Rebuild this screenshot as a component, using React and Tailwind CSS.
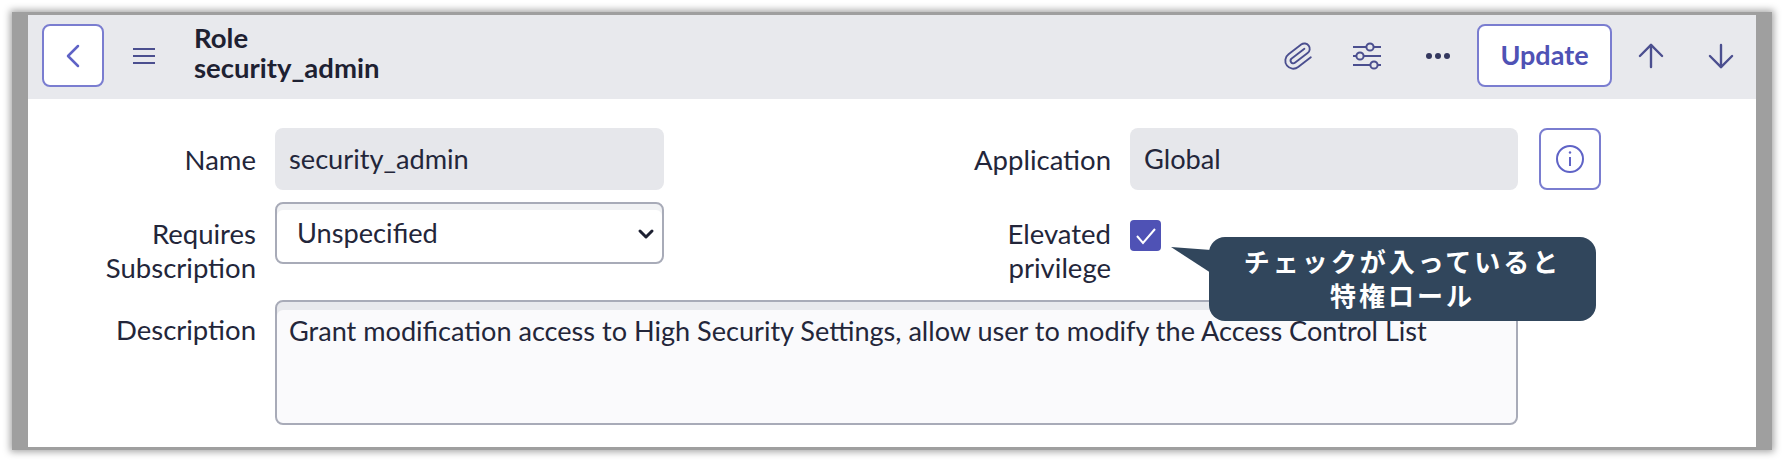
import { ChevronLeft, ChevronDown, ArrowUp, ArrowDown, Paperclip } from "lucide-react";

const INK = "#4b4f8f";

function MenuIcon() {
    return (
        <svg width="24" height="18" viewBox="0 0 24 18" fill="none" stroke={INK} strokeWidth="2.2">
            <path d="M1 2h22M1 9h22M1 16h22" />
        </svg>
    );
}

function SlidersIcon() {
    return (
        <svg width="30" height="28" viewBox="0 0 30 28" fill="none" stroke={INK} strokeWidth="2">
            <path d="M1 5h13M22 5h7M1 14h3M12 14h17M1 23h17M26 23h3" />
            <circle cx="18" cy="5" r="3.6" />
            <circle cx="8" cy="14" r="3.6" />
            <circle cx="22" cy="23" r="3.6" />
        </svg>
    );
}

function InfoIcon() {
    return (
        <svg width="30" height="30" viewBox="0 0 30 30" fill="none" stroke="#5f63c6" strokeWidth="2">
            <circle cx="15" cy="15" r="13" />
            <path d="M15 13v9" />
            <circle cx="15" cy="8.5" r="1.2" fill="#5f63c6" stroke="none" />
        </svg>
    );
}

function Label({ children }) {
    return <div className="pt-[15px] text-right text-[27.5px] leading-[34px] text-[#23263a]">{children}</div>;
}

export default function App() {
    return (
        <div className="h-[462px] w-[1784px] bg-white pt-[12px] pl-[12px] font-['Lato','Noto_Sans_CJK_JP',sans-serif]">
            <div className="relative h-[438px] w-[1760px] border-x-[16px] border-y-[3px] border-[#9f9f9f] bg-white shadow-[0_0_7px_2px_#a8a8a8]">
                {/* Header */}
                <div className="flex h-[84px] items-center bg-[#e8e9ed] pb-[3px] pl-[14px] pr-[16px]">
                    <button className="flex h-[63px] w-[62px] items-center justify-center rounded-[8px] border-2 border-[#7a7dd0] bg-white">
                        <ChevronLeft size={40} strokeWidth={1.5} color="#5f63c6" />
                    </button>
                    <div className="ml-[28px]">
                        <MenuIcon />
                    </div>
                    <div className="mb-[5px] ml-[38px] text-[27.5px] leading-[30px] font-bold text-[#1e2132]">
                        <div>Role</div>
                        <div>security_admin</div>
                    </div>
                    <div className="ml-auto flex items-center">
                        <Paperclip className="rotate-[8deg]" size={32} strokeWidth={1.4} color={INK} />
                        <div className="ml-[38px]">
                            <SlidersIcon />
                        </div>
                        <div className="ml-[44px] flex gap-[3px]">
                            <span className="size-[6px] rounded-full bg-[#34385f]" />
                            <span className="size-[6px] rounded-full bg-[#34385f]" />
                            <span className="size-[6px] rounded-full bg-[#34385f]" />
                        </div>
                        <button className="ml-[27px] h-[63px] w-[135px] rounded-[8px] border-2 border-[#7a7dd0] bg-white text-[27px] font-bold text-[#4f52b5]">
                            Update
                        </button>
                        <ArrowUp className="ml-[20px]" size={38} strokeWidth={1.5} color={INK} />
                        <ArrowDown className="ml-[32px]" size={38} strokeWidth={1.5} color={INK} />
                    </div>
                </div>

                {/* Form */}
                <div className="grid grid-cols-[228px_389px_428px_388px_64px] grid-rows-[62px_86px_125px] gap-x-[19px] gap-y-[12px] pt-[29px]">
                    <Label>Name</Label>
                    <input
                        readOnly
                        value="security_admin"
                        className="h-[62px] rounded-[8px] bg-[#e6e7eb] px-[14px] pb-[2px] text-[27.2px] text-[#23263a]"
                    />
                    <Label>Application</Label>
                    <input
                        readOnly
                        value="Global"
                        className="h-[62px] rounded-[8px] bg-[#e6e7eb] px-[14px] pb-[2px] text-[27.2px] text-[#23263a]"
                    />
                    <button className="ml-[2px] flex h-[62px] w-[62px] items-center justify-center rounded-[8px] border-2 border-[#7a7dd0] bg-white">
                        <InfoIcon />
                    </button>

                    <Label>
                        Requires
                        <br />
                        Subscription
                    </Label>
                    <div className="relative">
                        <select className="h-[62px] w-full appearance-none rounded-[8px] border-2 border-[#a8abb8] bg-white pl-[20px] pr-[8px] text-[27.2px] text-[#23263a] shadow-[inset_0_6px_0_#f1f2f4]">
                            <option>Unspecified</option>
                        </select>
                        <ChevronDown
                            className="pointer-events-none absolute top-[20px] right-[6px]"
                            size={24}
                            strokeWidth={3}
                            color="#1e2132"
                        />
                    </div>
                    <Label>
                        Elevated
                        <br />
                        privilege
                    </Label>
                    <div className="pt-[18px]">
                        <div className="flex size-[31px] items-center justify-center rounded-[4px] bg-[#4f52b5]">
                            <svg width="22" height="18" viewBox="0 0 22 18" fill="none" stroke="#fff" strokeWidth="2">
                                <path d="M2 9l6 7L20 2" />
                            </svg>
                        </div>
                    </div>
                    <div />

                    <div className="-mt-[2px]">
                        <Label>Description</Label>
                    </div>
                    <textarea
                        readOnly
                        value="Grant modification access to High Security Settings, allow user to modify the Access Control List"
                        className="col-span-3 h-[125px] resize-none rounded-[8px] border-2 border-[#a8abb8] bg-[#fafafc] px-[12px] pt-[12px] text-[27.1px] leading-[34px] text-[#23263a] shadow-[inset_0_8px_0_#e8e9ed]"
                    />
                </div>

                {/* Callout */}
                <div className="absolute top-[222px] left-[1181px] flex h-[84px] w-[387px] flex-col items-center justify-center rounded-[16px] bg-[#31465c] text-[26px] leading-[34px] font-semibold tracking-[3px] text-white">
                    <svg className="absolute top-[10px] left-[-38px]" width="40" height="26" viewBox="0 0 40 26" fill="#31465c">
                        <path d="M0 0L40 3V26Z" />
                    </svg>
                    <div>チェックが入っていると</div>
                    <div>特権ロール</div>
                </div>
            </div>
        </div>
    );
}
